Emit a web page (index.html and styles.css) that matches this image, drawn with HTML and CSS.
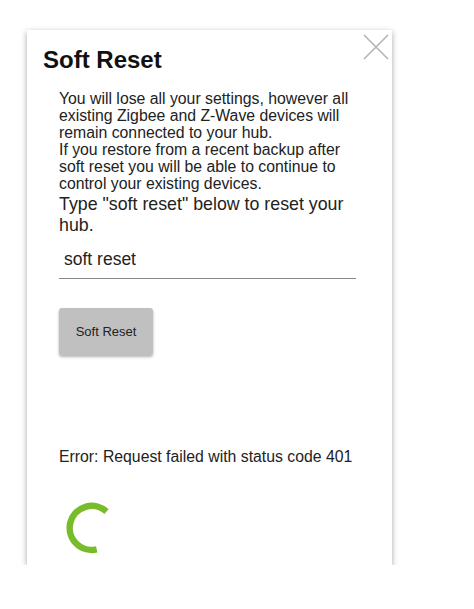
FILE: index.html
```html
<!DOCTYPE html>
<html lang="en">
<head>
    <title>Soft Reset</title>
    <link rel="stylesheet" href="styles.css">
</head>
<body>
    <div class="dialogo">
        <span class="cerrar">
            <svg width="28" height="28" viewBox="0 0 28 28">
                <path d="M2 2 L26 26 M26 2 L2 26" stroke="#b4b4b4" stroke-width="1.6" fill="none"/>
            </svg>
        </span>
        <h1 class="titulo">Soft Reset</h1>
        <div class="contenido">
            <p class="texto">You will lose all your settings, however all existing Zigbee and Z-Wave devices will remain connected to your hub.<br>If you restore from a recent backup after soft reset you will be able to continue to control your existing devices.</p>
            <p class="texto_grande">Type "soft reset" below to reset your hub.</p>
            <input class="campo" type="text" value="soft reset">
            <button class="boton" type="button">Soft Reset</button>
            <p class="error">Error: Request failed with status code 401</p>
            <div class="cargando">
                <svg width="56" height="56" viewBox="0 0 56 56">
                    <path d="M43.5 11.6 A22 22 0 1 0 33.7 49.3" stroke="#78bc2c" stroke-width="6.5" fill="none"/>
                </svg>
            </div>
        </div>
    </div>
</body>
</html>
```
FILE: styles.css
```css
body{
    margin: 0;
    background-color: white;
}

*{font-family: "Liberation Sans", Arial, sans-serif;}

.dialogo{
    position: relative;
    box-sizing: border-box;
    width: 365px;
    height: 535px;
    margin-left: 27px;
    margin-top: 30px;
    padding: 16px 16px 0 16px;
    background-color: white;
    box-shadow: 0 2px 6px rgba(0, 0, 0, 0.35);
}

.cerrar{
    position: absolute;
    top: 3px;
    right: 2px;
}

.titulo{
    font-size: 24px;
    font-weight: bold;
    margin: 0;
    color: #111;
}

.contenido{
    padding-left: 16px;
    padding-top: 16px;
}

.texto{
    font-size: 15.8px;
    line-height: 17px;
    margin: 0;
    color: #222;
    width: 305px;
}

.texto_grande{
    font-size: 17.8px;
    line-height: 21px;
    margin: 0;
    margin-top: 2px;
    color: #222;
    width: 305px;
}

.campo{
    display: block;
    box-sizing: border-box;
    width: 297px;
    margin-top: 9px;
    padding: 4px 5px 8px 5px;
    border: none;
    border-bottom: 1px solid #888;
    font-size: 17.5px;
    color: #222;
    outline: none;
}

.boton{
    display: block;
    width: 94px;
    height: 47px;
    margin-top: 29px;
    background-color: #c0c0c0;
    border: none;
    border-radius: 3px;
    box-shadow: 0 2px 3px rgba(0, 0, 0, 0.3);
    font-size: 13px;
    color: #222;
}

.error{
    font-size: 15.8px;
    margin: 0;
    margin-top: 93px;
    color: #222;
}

.cargando{
    margin-top: 34px;
    margin-left: 4px;
}
```
